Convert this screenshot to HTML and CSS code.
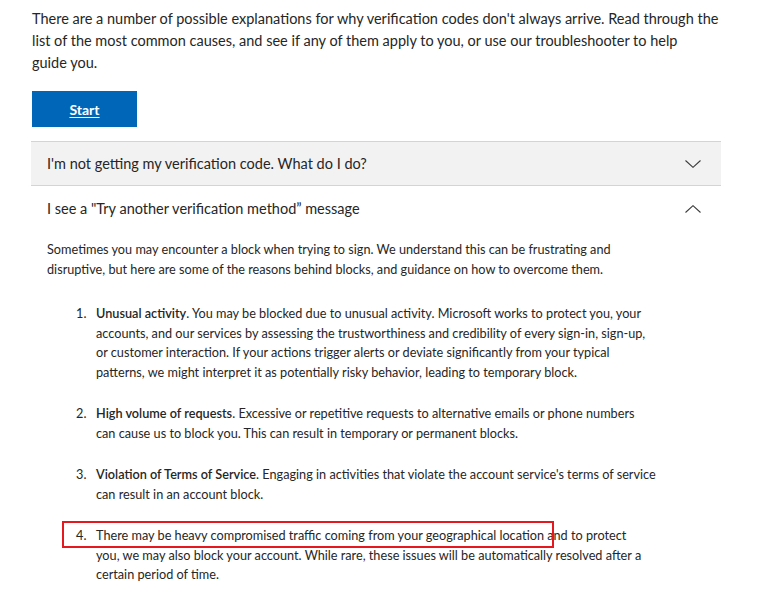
FILE: index.html
```html
<!DOCTYPE html>
<html lang="en">
<head>
<meta charset="utf-8">
<title>Verification codes</title>
<link rel="stylesheet" href="styles.css">
</head>
<body>
<main class="page">
  <p class="intro">There are a number of possible explanations for why verification codes don't always arrive. Read through the list of the most common causes, and see if any of them apply to you, or use our troubleshooter to help <span class="nowrap">guide you.</span></p>
  <a class="btn" href="#">Start</a>
  <section class="accordion">
    <div class="acc-item hover">
      <div class="acc-head">
        <span class="acc-title">I'm not getting my verification code. What do I do?</span>
        <svg class="chev" width="16" height="8" viewBox="0 0 16 8"><path d="M0.5 0.5 L8 7.3 L15.5 0.5" fill="none" stroke="#3b3b3b" stroke-width="1.1"/></svg>
      </div>
    </div>
    <div class="acc-item open">
      <div class="acc-head">
        <span class="acc-title">I see a "Try another verification method” message</span>
        <svg class="chev" width="16" height="8" viewBox="0 0 16 8"><path d="M0.5 7.5 L8 0.7 L15.5 7.5" fill="none" stroke="#3b3b3b" stroke-width="1.1"/></svg>
      </div>
      <div class="acc-body">
        <p>Sometimes you may encounter a block when trying to sign. We understand this can be frustrating and disruptive, but here are some of the reasons behind blocks, and guidance on how to overcome them.</p>
        <ol class="reasons">
          <li><b>Unusual activity</b>. You may be blocked due to unusual activity. Microsoft works to protect you, your accounts, and our services by assessing the trustworthiness and credibility of every sign-in, sign-up, or customer interaction. If your actions trigger alerts or deviate significantly from your typical patterns, we might interpret it as potentially risky behavior, leading to temporary block.</li>
          <li><b>High volume of requests</b>. Excessive or repetitive requests to alternative emails or phone numbers can cause us to block you. This can result in temporary or permanent blocks.</li>
          <li><b>Violation of Terms of Service</b>. Engaging in activities that violate the account service's terms of service can result in an account block.</li>
          <li class="marked">There may be heavy compromised traffic coming from your geographical location and to protect <span class="nowrap">you, we</span> may also block your account. While rare, these issues will be automatically resolved after a certain period of time.<span class="highlight" aria-hidden="true"></span></li>
        </ol>
      </div>
    </div>
  </section>
</main>
</body>
</html>
```
FILE: styles.css
```css
html, body {
  margin: 0;
  background: #fff;
}
body {
  font-family: Lato, "Liberation Sans", sans-serif;
  color: #262626;
}
.nowrap {
  white-space: nowrap;
}
.page {
  padding: 8px 0 0 31px;
  width: 690px;
}
.intro {
  margin: 0 0 17px 1px;
  font-size: 14.5px;
  line-height: 22px;
}
.btn {
  display: flex;
  align-items: center;
  justify-content: center;
  width: 105px;
  height: 36px;
  margin-left: 1px;
  background: #0067b8;
  color: #fff;
  font-weight: 700;
  font-size: 14px;
  text-decoration: underline;
  text-underline-offset: 2px;
}
.accordion {
  margin-top: 14px;
  border-top: 1px solid #d4d4d4;
}
.acc-item.hover {
  background: #f2f2f2;
  border-bottom: 1px solid #d4d4d4;
}
.acc-head {
  display: flex;
  align-items: center;
  justify-content: space-between;
  height: 43px;
  padding: 0 20px 0 16px;
  font-size: 14.5px;
}
.open .acc-head {
  height: 45px;
}
.chev {
  display: block;
}
.acc-body {
  padding: 9px 0 0 16px;
  width: 610px;
  font-size: 12.7px;
  line-height: 19.5px;
}
.acc-body p {
  margin: 0;
}
.reasons {
  margin: 25px 0 0;
  padding-left: 49px;
}
.reasons li {
  position: relative;
  margin-bottom: 22px;
}
.reasons li::marker {
  content: counter(list-item) ".\2002\00a0";
}
.reasons b {
  font-weight: 600;
}
.highlight {
  position: absolute;
  left: -34px;
  top: -5px;
  width: 488px;
  height: 23px;
  border: 2px solid #e3191f;
  pointer-events: none;
}
```
